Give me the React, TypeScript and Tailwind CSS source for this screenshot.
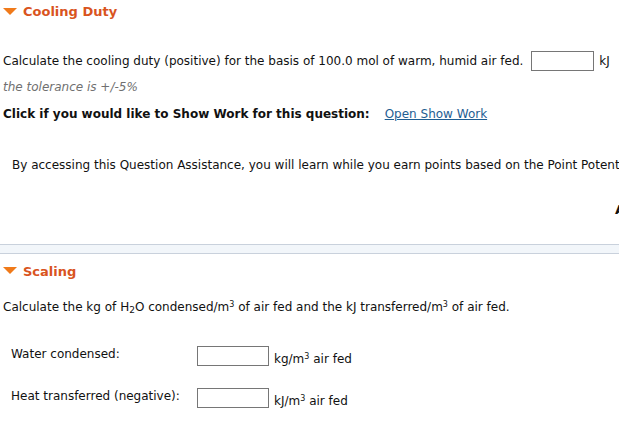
import React from 'react';

function Caret() {
  return (
    <svg width="14" height="8" viewBox="0 0 14 8" className="shrink-0">
      <polygon points="0,0 14,0 7,7" fill="#f07a1a" />
    </svg>
  );
}

function SectionHeader({ title }: { title: string }) {
  return (
    <div className="flex items-center gap-[6px] pl-[3px]">
      <Caret />
      <span className="text-[13px] font-bold text-[#d9541e]">{title}</span>
    </div>
  );
}

function AnswerBox({ w = 'w-[72px]' }: { w?: string }) {
  return <span className={`inline-block h-[20px] border border-[#767676] bg-white ${w}`} />;
}

function UnitRow({ label, unit }: { label: string; unit: string }) {
  return (
    <div className="flex items-center h-[20px]">
      <span className="w-[186px] relative -top-[2px]">{label}</span>
      <AnswerBox />
      <span className="ml-[5px] relative top-[3px]">
        {unit}/m<sup className="text-[8px]">3</sup> air fed
      </span>
    </div>
  );
}

export default function App() {
  return (
    <div className="w-[619px] h-[433px] overflow-hidden bg-white text-[12px] text-[#111] font-['DejaVu_Sans',Verdana,sans-serif]">
      {/* Cooling duty */}
      <div className="pt-[2px]">
        <SectionHeader title="Cooling Duty" />
      </div>

      <div className="mt-[29px] pl-[3px] flex items-center whitespace-nowrap">
        <span>Calculate the cooling duty (positive) for the basis of 100.0 mol of warm, humid air fed.</span>
        <span className="ml-[8px] flex items-center">
          <AnswerBox w="w-[63px]" />
          <span className="ml-[5px]">kJ</span>
        </span>
      </div>

      <div className="mt-[7px] pl-[3px] italic text-[#707070]">the tolerance is +/-5%</div>

      <div className="mt-[9px] pl-[3px] flex items-center whitespace-nowrap">
        <span className="font-bold">Click if you would like to Show Work for this question:</span>
        <a className="ml-[15px] text-[#1f5e92] underline">Open Show Work</a>
      </div>

      <div className="mt-[33px] pl-[12px] whitespace-nowrap">
        By accessing this Question Assistance, you will learn while you earn points based on the Point Potential
      </div>

      <div className="h-[70px] relative">
        <span className="absolute left-[615px] top-[26px] font-bold text-[13px]">A</span>
      </div>

      {/* divider */}
      <div className="border-y border-[#c9d1dc] bg-[#f2f6fa] h-[10px]" />

      {/* Scaling */}
      <div className="pt-[8px]">
        <SectionHeader title="Scaling" />
      </div>

      <div className="mt-[17px] pl-[3px] whitespace-nowrap">
        Calculate the kg of H<sub className="text-[9px] align-baseline relative top-[2px]">2</sub>O condensed/m
        <sup className="text-[8px]">3</sup> of air fed and the kJ transferred/m<sup className="text-[8px]">3</sup> of air fed.
      </div>

      <div className="mt-[30px] pl-[11px] flex flex-col gap-[22px] whitespace-nowrap">
        <UnitRow label="Water condensed:" unit="kg" />
        <UnitRow label="Heat transferred (negative):" unit="kJ" />
      </div>
    </div>
  );
}
